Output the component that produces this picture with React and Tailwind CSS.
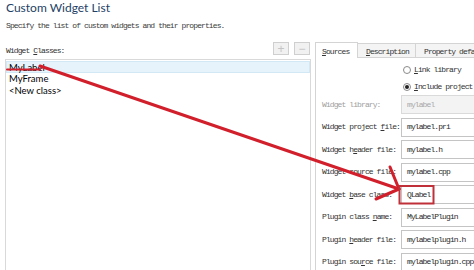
import React from "react";

const mono = "font-['Liberation_Mono','Courier_New',monospace] text-[8px] tracking-[-0.9px] whitespace-nowrap";

function Field({ label, value, disabled }) {
  return (
    <div className="flex items-center h-[19px]">
      <div className={`w-[79px] shrink-0 ${mono} ${disabled ? "text-[#a0a0a0]" : "text-[#333]"}`}>{label}</div>
      <div
        className={`h-[19px] w-[90px] shrink-0 flex items-center pl-[5px] border ${mono} ${
          disabled ? "bg-[#f3f3f3] border-[#dadada] text-[#a8a8a8]" : "bg-white border-[#c4c4c4] text-[#2a2a2a]"
        }`}
      >
        {value}
      </div>
    </div>
  );
}

function Radio({ checked, children }) {
  return (
    <div className="flex items-center h-[17px] pl-[81px] gap-[3px]">
      <div className="w-[8px] h-[8px] shrink-0 rounded-full border border-[#8a8a8a] bg-white flex items-center justify-center">
        {checked && <div className="w-[4px] h-[4px] rounded-full bg-[#222]" />}
      </div>
      <div className={`${mono} text-[#333]`}>{children}</div>
    </div>
  );
}

export default function App() {
  return (
    <div className="relative w-[474px] h-[270px] overflow-hidden bg-white">
      <div className="h-[17px] pl-[6px] pt-[1px] font-['Lato',sans-serif] text-[12px] leading-[13px] text-[#243f66]">
        Custom Widget List
      </div>
      <div className={`h-[20px] pl-[6px] pt-[4px] leading-[9px] text-[#3c3c3c] ${mono}`}>
        Specify the list of custom widgets and their properties.
      </div>
      <div className="flex pl-[5px] gap-[4px] mt-[4px]">
        <div className="w-[306px] shrink-0 flex flex-col">
          <div className="h-[18px] flex items-start justify-between">
            <div className={`pl-[1px] pt-[5px] leading-[9px] text-[#333] ${mono}`}>
              Widget <u>C</u>lasses:
            </div>
            <div className="flex gap-[5px] pt-[1px] pr-[1px]">
              <div className="w-[16px] h-[13px] border border-[#cfcfcf] bg-[#f1f1f1] flex items-center justify-center text-[#c4c4c4] text-[12px] leading-none font-['Liberation_Sans',sans-serif]">
                +
              </div>
              <div className="w-[16px] h-[13px] border border-[#cfcfcf] bg-[#f1f1f1] flex items-center justify-center text-[#c4c4c4] text-[12px] leading-none font-['Liberation_Sans',sans-serif]">
                −
              </div>
            </div>
          </div>
          <div className="h-[230px] border border-[#d9d9d9] pt-[1px] font-['Lato',sans-serif] text-[9.5px] text-black">
            <div className="h-[12px] leading-[11px] pl-[2px] bg-[#e6f3fb] border border-[#d2e8f5]">MyLabel</div>
            <div className="h-[12px] leading-[12px] pl-[3px]">MyFrame</div>
            <div className="h-[12px] leading-[12px] pl-[3px]">&lt;New class&gt;</div>
          </div>
        </div>
        <div className="flex-1 flex flex-col min-w-0 overflow-hidden">
          <div className={`flex items-end h-[16px] ${mono} text-[#333]`}>
            <div className="w-[43px] shrink-0 h-[16px] border border-b-0 border-[#d4d4d4] bg-white pl-[6px] pt-[4px] leading-[9px] relative z-10 -mb-[1px]">
              <u>S</u>ources
            </div>
            <div className="w-[58px] shrink-0 h-[14px] border border-l-0 border-b-0 border-[#d4d4d4] bg-[#f4f4f4] pl-[8px] pt-[3px] leading-[9px]">
              <u>D</u>escription
            </div>
            <div className="w-[80px] shrink-0 h-[14px] border border-l-0 border-b-0 border-[#d4d4d4] bg-[#f4f4f4] pl-[8px] pt-[3px] leading-[9px]">
              Property defaults
            </div>
          </div>
          <div className="border-t border-l border-[#d4d4d4] h-[230px] pl-[6px] pt-[3px]">
            <Radio checked={false}>
              <u>L</u>ink library
            </Radio>
            <Radio checked>
              <u>I</u>nclude project
            </Radio>
            <div className="flex flex-col gap-[3.5px]">
              <Field label="Widget library:" value="mylabel" disabled />
              <Field label={<>Widget project <u>f</u>ile:</>} value="mylabel.pri" />
              <Field label={<>Widget h<u>e</u>ader file:</>} value="mylabel.h" />
              <Field label={<>Widget source file:</>} value="mylabel.cpp" />
              <Field label={<>Widget <u>b</u>ase class:</>} value="QLabel" />
              <Field label={<>Plugin class <u>n</u>ame:</>} value="MyLabelPlugin" />
              <Field label={<>Plugin <u>h</u>eader file:</>} value="mylabelplugin.h" />
              <Field label={<>Plugin sou<u>r</u>ce file:</>} value="mylabelplugin.cpp" />
            </div>
          </div>
        </div>
      </div>
      <svg className="absolute left-0 top-0 pointer-events-none" width="474" height="270" viewBox="0 0 474 270">
        <g stroke="#d21f2c" strokeLinecap="round" fill="none">
          <line x1="7" y1="69.5" x2="40" y2="69.5" strokeWidth="2" />
          <line x1="40" y1="66" x2="399" y2="189" strokeWidth="3" />
          <line x1="399" y1="189" x2="390" y2="167" strokeWidth="3" />
          <line x1="399" y1="189" x2="376" y2="199" strokeWidth="3" />
        </g>
        <rect x="399.5" y="186" width="34" height="17.5" fill="none" stroke="#bf3038" strokeWidth="2" />
      </svg>
    </div>
  );
}
